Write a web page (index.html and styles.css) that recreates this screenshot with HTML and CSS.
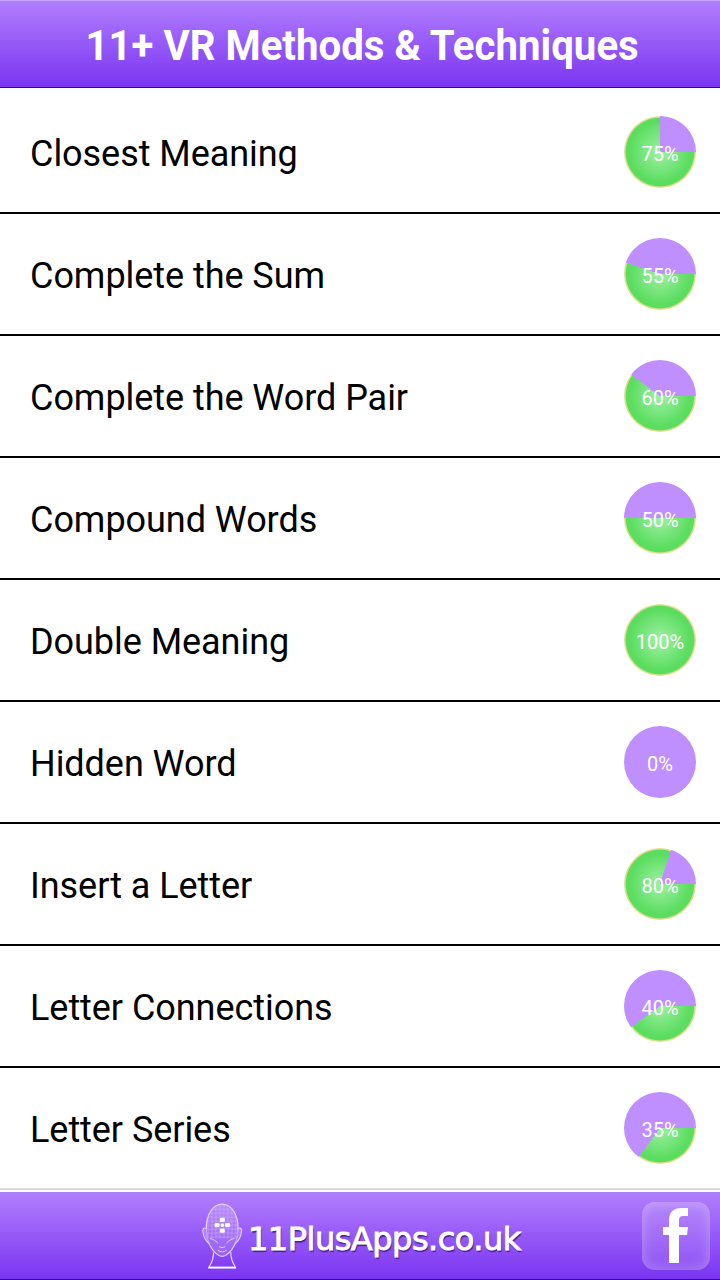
FILE: index.html
```html
<!DOCTYPE html>
<html lang="en">
<head>
<meta charset="utf-8">
<title>11+ VR Methods &amp; Techniques</title>
<link rel="stylesheet" href="styles.css">
</head>
<body>
<div class="app">
  <header class="top"><h1>11+ VR Methods &amp; Techniques</h1></header>
  <ul class="list">
    <li class="row first"><span class="name">Closest Meaning</span><div class="pie" style="--p:75%"><span>75%</span></div></li>
    <li class="row"><span class="name">Complete the Sum</span><div class="pie" style="--p:55%"><span>55%</span></div></li>
    <li class="row"><span class="name">Complete the Word Pair</span><div class="pie" style="--p:60%"><span>60%</span></div></li>
    <li class="row"><span class="name">Compound Words</span><div class="pie" style="--p:50%"><span>50%</span></div></li>
    <li class="row"><span class="name">Double Meaning</span><div class="pie" style="--p:100%"><span>100%</span></div></li>
    <li class="row"><span class="name">Hidden Word</span><div class="pie" style="--p:0%"><span>0%</span></div></li>
    <li class="row"><span class="name">Insert a Letter</span><div class="pie" style="--p:80%"><span>80%</span></div></li>
    <li class="row"><span class="name">Letter Connections</span><div class="pie" style="--p:40%"><span>40%</span></div></li>
    <li class="row last"><span class="name">Letter Series</span><div class="pie" style="--p:35%"><span>35%</span></div></li>
  </ul>
  <footer class="bottom">
    <svg class="head" viewBox="36 20 124 205" aria-hidden="true">
      <defs>
        <pattern id="mesh" width="12" height="12" patternUnits="userSpaceOnUse">
          <path d="M0 6h12M6 0v12" stroke="#fff" stroke-opacity=".22" stroke-width="3" fill="none"/>
        </pattern>
      </defs>
      <path d="M49 105C47 60 68 26 97 26s50 34 48 79c0 20-8 44-20 60-9 11-20 19-28 19s-19-8-28-19C57 149 49 125 49 105z" fill="#fff" fill-opacity=".14"/>
      <path d="M49 130V105C47 60 68 26 97 26s50 34 48 79v25z" fill="url(#mesh)"/>
      <path d="M49 105C47 60 68 26 97 26s50 34 48 79c0 20-8 44-20 60-9 11-20 19-28 19s-19-8-28-19C57 149 49 125 49 105z" fill="none" stroke="#e3d0ff" stroke-width="3.500"/>
      <path d="M49 100c-9-5-12 2-10 12 2 12 8 26 18 33M145 100c9-5 12 2 10 12-2 12-8 26-18 33" fill="#b78bfb" fill-opacity=".7" stroke="#e3d0ff" stroke-width="3.500"/>
      <path d="M60 130c10 2 18 7 24 14M134 130c-10 2-18 7-24 14M84 166c8 6 18 6 26 0M88 155c6 3 12 3 18 0" fill="none" stroke="#e3d0ff" stroke-width="3"/>
      <path d="M71 172c0 14-3 28-13 43M123 172c0 14 3 28 13 43" fill="none" stroke="#e8dbff" stroke-width="3.500"/>
      <path d="M55 218h84" stroke="#fff" stroke-width="6"/>
      <g fill="#fff">
        <rect x="90" y="67" width="15" height="13" rx="4"/>
        <rect x="90" y="100" width="15" height="13" rx="4"/>
        <rect x="74" y="83" width="15" height="13" rx="4"/>
        <rect x="106" y="83" width="15" height="13" rx="4"/>
        <rect x="93" y="85" width="9" height="10" rx="2"/>
      </g>
    </svg>
    <span class="brand">11PlusApps.co.uk</span>
    <div class="fb">
      <svg viewBox="0 0 68 68" aria-hidden="true">
        <path d="M27 61V33h-6v-8h6v-7c0-8 5-12 12-12h7v8h-5c-3 0-4 1.500-4 4v7h9l-1 8h-8v28z" fill="#fff"/>
      </svg>
    </div>
  </footer>
</div>
</body>
</html>
```

FILE: styles.css
```css
* { box-sizing: border-box; }
html, body { margin: 0; padding: 0; }
body { background: #fff; font-family: Roboto, "Liberation Sans", sans-serif; }
.app {
  width: 720px;
  height: 1280px;
  display: flex;
  flex-direction: column;
  overflow: hidden;
}
.top {
  height: 88px;
  flex: none;
  display: flex;
  align-items: center;
  justify-content: center;
  padding: 5px 0 0 4px;
  border-bottom: 1px solid #2c1160;
  background: linear-gradient(#b27ffe, #7a34f1);
  box-shadow: inset 0 1px 0 #c9a6ff;
}
.top h1 {
  margin: 0;
  color: #fff;
  font-size: 42px;
  font-weight: 700;
  line-height: 1;
  white-space: nowrap;
  transform: scaleX(.957);
}
.list {
  list-style: none;
  margin: 0;
  padding: 0;
  flex: 1;
  overflow: hidden;
}
.row {
  height: 122px;
  padding: 0 24px 0 30px;
  display: flex;
  align-items: center;
  justify-content: space-between;
  border-bottom: 2px solid #000;
}
.row.first { height: 126px; padding-top: 4px; }
.row.last { border-bottom: 2px solid #d8d8d8; }
.name {
  font-size: 36px;
  font-weight: 400;
  letter-spacing: -0.05px;
  color: #000;
  line-height: 1;
  position: relative;
  top: 2px;
}
.pie {
  width: 72px;
  height: 72px;
  flex: none;
  border-radius: 50%;
  display: flex;
  align-items: center;
  justify-content: center;
  background:
    conic-gradient(from 90deg, transparent 0 var(--p), #bf8eff var(--p) 100%),
    radial-gradient(circle closest-side, #a0f1a3 0, #5bdd60 84%, #5bdd60 94%, #e3df90 97%, #e3df90 100%);
}
.pie span {
  color: #fff;
  font-size: 20px;
  font-weight: 400;
  line-height: 1;
  position: relative;
  top: 2px;
}
.bottom {
  height: 90px;
  flex: none;
  display: flex;
  align-items: center;
  padding: 0 10px 0 202px;
  border-top: 2px solid #fff;
  border-bottom: 1px solid #2c1160;
  background: linear-gradient(#b27ffe, #7a34f1);
}
.head {
  width: 41px;
  height: 68px;
  flex: none;
  display: block;
}
.brand {
  margin-left: 5px;
  position: relative;
  top: 3px;
  color: #fff;
  font-family: "DejaVu Sans", sans-serif;
  font-size: 32px;
  letter-spacing: -0.5px;
  line-height: 1;
  -webkit-text-stroke: 0.9px #fff;
  text-shadow: 1px 2px 1px rgba(40, 10, 90, .7);
}
.fb {
  margin-left: auto;
  width: 68px;
  height: 68px;
  border-radius: 13px;
  background: rgba(255, 255, 255, .12);
  box-shadow: inset 0 0 14px rgba(255, 255, 255, .3);
}
.fb svg { display: block; width: 68px; height: 68px; }
```
